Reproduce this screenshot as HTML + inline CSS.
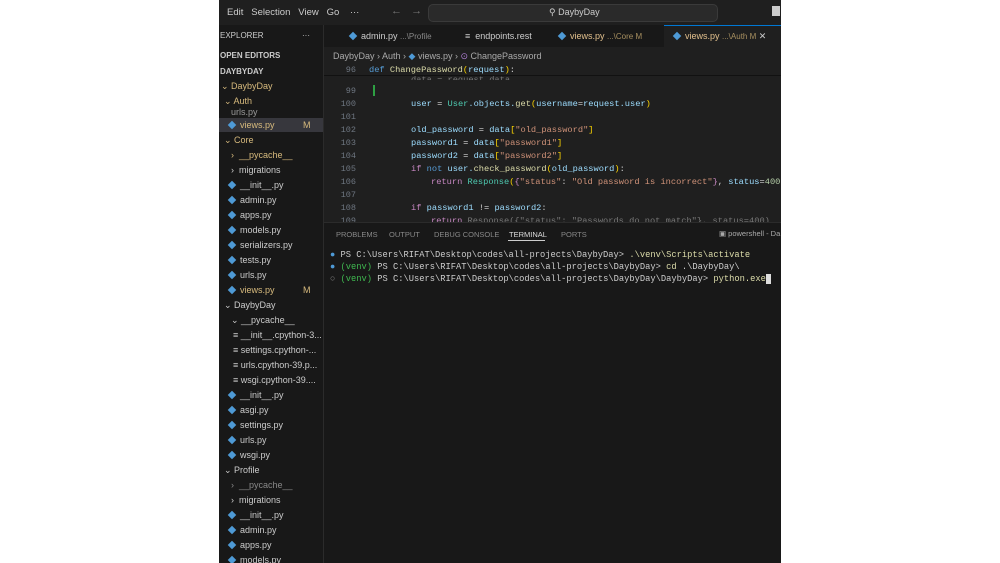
<!DOCTYPE html>
<html><head><meta charset="utf-8"><style>
body{margin:0;width:1000px;height:563px;background:#fff;position:relative;overflow:hidden;font-family:"Liberation Sans",sans-serif}
#w{position:absolute;left:219px;top:0;width:562px;height:563px;background:#1f1f1f;overflow:hidden}
.a{position:absolute;white-space:nowrap}
#side{position:absolute;left:0;top:25px;width:104px;height:538px;background:#181818;border-right:1px solid #2b2b2b}
.s{position:absolute;font-size:9px;color:#cccccc;white-space:nowrap}
.ic{display:inline-block;width:6px;height:6px;background:#4e9ad6;transform:rotate(45deg);margin-right:5px}
.ln{position:absolute;left:0;width:32px;text-align:right;color:#6e7681;font-family:"Liberation Mono",monospace;font-size:8.5px}
.cd{position:absolute;left:47px;font-family:"Liberation Mono",monospace;font-size:8.7px;color:#9cdcfe;white-space:nowrap}
.k{color:#569cd6}.kp{color:#c586c0}.f{color:#dcdcaa}.st{color:#ce9178}.t{color:#4ec9b0}.y{color:#ffd700}.w{color:#d4d4d4}
.tl{position:absolute;left:6px;font-family:"Liberation Mono",monospace;font-size:8.75px;color:#cccccc;white-space:nowrap}
.pt{position:absolute;top:230px;font-size:7.5px;color:#888}
</style></head><body>
<div id="w">
<div class="a" style="left:0;top:0;width:562px;height:25px;background:#1f1f1f;border-bottom:1px solid #2b2b2b"></div>
<div class="a" style="left:8px;top:7px;font-size:9.5px;color:#ccc">Edit&nbsp;&nbsp;&nbsp;Selection&nbsp;&nbsp;&nbsp;View&nbsp;&nbsp;&nbsp;Go&nbsp;&nbsp;&nbsp;&nbsp;···</div>
<div class="a" style="left:172px;top:5px;font-size:11px;color:#777">←&nbsp;&nbsp;&nbsp;→</div>
<div class="a" style="left:209px;top:4px;width:288px;height:16px;background:#2a2a2a;border:1px solid #3a3a3a;border-radius:5px"></div>
<div class="a" style="left:330px;top:7px;font-size:9px;color:#ccc">⚲ DaybyDay</div>
<div class="a" style="left:553px;top:6px;width:8px;height:10px;background:#ccc"></div>
<div id="side">
<div class="s" style="left:1px;top:6px;font-size:8px">EXPLORER<span style="position:absolute;left:82px">···</span></div>
<div class="s" style="left:1px;top:26px;font-size:8px;font-weight:bold">OPEN EDITORS</div>
<div class="s" style="left:1px;top:42px;font-size:8px;font-weight:bold">DAYBYDAY</div>
<div class="s" style="left:2px;top:56px;color:#d7ba7d">⌄ DaybyDay</div>
<div class="s" style="left:5px;top:71px;color:#d7ba7d">⌄ Auth</div>
<div class="s" style="left:12px;top:82px;color:#999">urls.py</div>
<div class="a" style="left:0;top:93px;width:104px;height:14px;background:#37373d"></div>
<div class="s" style="left:10px;top:95px;color:#d7ba7d"><span class="ic"></span>views.py<span style="position:absolute;left:74px">M</span></div>
<div class="s" style="left:5px;top:110px;color:#d7ba7d">⌄ Core</div>
<div class="s" style="left:12px;top:125px;color:#d7ba7d">›&nbsp; __pycache__</div>
<div class="s" style="left:12px;top:140px">›&nbsp; migrations</div>
<div class="s" style="left:10px;top:155px"><span class="ic"></span>__init__.py</div>
<div class="s" style="left:10px;top:170px"><span class="ic"></span>admin.py</div>
<div class="s" style="left:10px;top:185px"><span class="ic"></span>apps.py</div>
<div class="s" style="left:10px;top:200px"><span class="ic"></span>models.py</div>
<div class="s" style="left:10px;top:215px"><span class="ic"></span>serializers.py</div>
<div class="s" style="left:10px;top:230px"><span class="ic"></span>tests.py</div>
<div class="s" style="left:10px;top:245px"><span class="ic"></span>urls.py</div>
<div class="s" style="left:10px;top:260px;color:#d7ba7d"><span class="ic"></span>views.py<span style="position:absolute;left:74px">M</span></div>
<div class="s" style="left:5px;top:275px">⌄ DaybyDay</div>
<div class="s" style="left:12px;top:290px">⌄ __pycache__</div>
<div class="s" style="left:14px;top:305px">≡ __init__.cpython-3...</div>
<div class="s" style="left:14px;top:320px">≡ settings.cpython-...</div>
<div class="s" style="left:14px;top:335px">≡ urls.cpython-39.p...</div>
<div class="s" style="left:14px;top:350px">≡ wsgi.cpython-39....</div>
<div class="s" style="left:10px;top:365px"><span class="ic"></span>__init__.py</div>
<div class="s" style="left:10px;top:380px"><span class="ic"></span>asgi.py</div>
<div class="s" style="left:10px;top:395px"><span class="ic"></span>settings.py</div>
<div class="s" style="left:10px;top:410px"><span class="ic"></span>urls.py</div>
<div class="s" style="left:10px;top:425px"><span class="ic"></span>wsgi.py</div>
<div class="s" style="left:5px;top:440px">⌄ Profile</div>
<div class="s" style="left:12px;top:455px;color:#888">›&nbsp; __pycache__</div>
<div class="s" style="left:12px;top:470px">›&nbsp; migrations</div>
<div class="s" style="left:10px;top:485px"><span class="ic"></span>__init__.py</div>
<div class="s" style="left:10px;top:500px"><span class="ic"></span>admin.py</div>
<div class="s" style="left:10px;top:515px"><span class="ic"></span>apps.py</div>
<div class="s" style="left:10px;top:530px"><span class="ic"></span>models.py</div>
</div>
<div class="a" style="left:105px;top:25px;width:457px;height:22px;background:#181818"></div>
<div class="a" style="left:445px;top:25px;width:117px;height:22px;background:#1f1f1f;border-top:1px solid #0078d4"></div>
<div class="a" style="left:131px;top:31px;font-size:9px;color:#ccc"><span class="ic"></span>admin.py <span style="color:#888;font-size:8px">...\Profile</span></div>
<div class="a" style="left:246px;top:31px;font-size:9px;color:#ccc">≡&nbsp; endpoints.rest</div>
<div class="a" style="left:340px;top:31px;font-size:9px;color:#e2c08d"><span class="ic"></span>views.py <span style="font-size:8px;color:#a89060">...\Core M</span></div>
<div class="a" style="left:455px;top:31px;font-size:9px;color:#e2c08d"><span class="ic"></span>views.py <span style="font-size:8px;color:#a89060">...\Auth M</span> <span style="color:#ccc">✕</span></div>
<div class="a" style="left:114px;top:51px;font-size:9px;color:#aaa">DaybyDay › Auth › <span style="color:#4e9ad6">◆</span> views.py › <span style="color:#b180d7">⊙</span> ChangePassword</div>
<div class="a" style="left:105px;top:62px;width:457px;height:160px">
<div class="ln" style="top:3px">96</div><div class="cd" style="top:3px;left:45px"><span class="k">def</span> <span class="f">ChangePassword</span><span class="y">(</span>request<span class="y">)</span><span class="w">:</span></div>
<div class="cd" style="top:13px;left:87px;color:#777;clip-path:inset(0 0 50% 0)">data = request.data</div>
<div class="a" style="left:0;top:13px;width:457px;height:1px;background:#111"></div>
<div class="ln" style="top:24px">99</div><div class="a" style="left:49px;top:23px;width:2px;height:11px;background:#2ea043"></div>
<div class="ln" style="top:37px">100</div><div class="cd" style="top:37px;left:87px">user <span class="w">=</span> <span class="t">User</span>.objects.<span class="f">get</span><span class="y">(</span>username<span class="w">=</span>request.user<span class="y">)</span></div>
<div class="ln" style="top:50px">101</div>
<div class="ln" style="top:63px">102</div><div class="cd" style="top:63px;left:87px">old_password <span class="w">=</span> data<span class="y">[</span><span class="st">"old_password"</span><span class="y">]</span></div>
<div class="ln" style="top:76px">103</div><div class="cd" style="top:76px;left:87px">password1 <span class="w">=</span> data<span class="y">[</span><span class="st">"password1"</span><span class="y">]</span></div>
<div class="ln" style="top:89px">104</div><div class="cd" style="top:89px;left:87px">password2 <span class="w">=</span> data<span class="y">[</span><span class="st">"password2"</span><span class="y">]</span></div>
<div class="ln" style="top:102px">105</div><div class="cd" style="top:102px;left:87px"><span class="kp">if</span> <span class="k">not</span> user.<span class="f">check_password</span><span class="y">(</span>old_password<span class="y">)</span><span class="w">:</span></div>
<div class="ln" style="top:115px">106</div><div class="cd" style="top:115px;left:107px"><span class="kp">return</span> <span class="t">Response</span><span class="y">(</span><span class="kp">{</span><span class="st">"status"</span><span class="w">: </span><span class="st">"Old password is incorrect"</span><span class="kp">}</span><span class="w">, </span>status<span class="w">=</span><span style="color:#b5cea8">400</span></div>
<div class="ln" style="top:128px">107</div>
<div class="ln" style="top:141px">108</div><div class="cd" style="top:141px;left:87px"><span class="kp">if</span> password1 <span class="w">!=</span> password2<span class="w">:</span></div>
<div class="ln" style="top:154px">109</div><div class="cd" style="top:154px;left:107px;color:#777"><span class="kp">return</span> Response({"status": "Passwords do not match"}, status=400)</div>
</div>
<div class="a" style="left:105px;top:222px;width:457px;height:341px;background:#181818;border-top:1px solid #2b2b2b"></div>
<div class="pt" style="left:117px">PROBLEMS</div>
<div class="pt" style="left:170px">OUTPUT</div>
<div class="pt" style="left:215px">DEBUG CONSOLE</div>
<div class="pt" style="left:290px;color:#ddd">TERMINAL</div>
<div class="pt" style="left:342px">PORTS</div>
<div class="a" style="left:289px;top:240px;width:37px;height:1px;background:#ccc"></div>
<div class="a" style="left:500px;top:229px;font-size:7.5px;color:#aaa">▣ powershell - Da</div>
<div class="a" style="left:105px;top:248px;width:457px;height:40px">
<div class="tl" style="top:2px"><span style="color:#4e9ad6">●</span> PS C:\Users\RIFAT\Desktop\codes\all-projects\DaybyDay&gt; <span class="f">.\venv\Scripts\activate</span></div>
<div class="tl" style="top:14px"><span style="color:#4e9ad6">●</span> <span style="color:#3fb950">(venv)</span> PS C:\Users\RIFAT\Desktop\codes\all-projects\DaybyDay&gt; <span class="f">cd</span> .\DaybyDay\</div>
<div class="tl" style="top:26px"><span style="color:#888">○</span> <span style="color:#3fb950">(venv)</span> PS C:\Users\RIFAT\Desktop\codes\all-projects\DaybyDay\DaybyDay&gt; <span class="f">python.exe</span><span style="background:#ddd">&nbsp;</span></div>
</div>
</div>
</body></html>
